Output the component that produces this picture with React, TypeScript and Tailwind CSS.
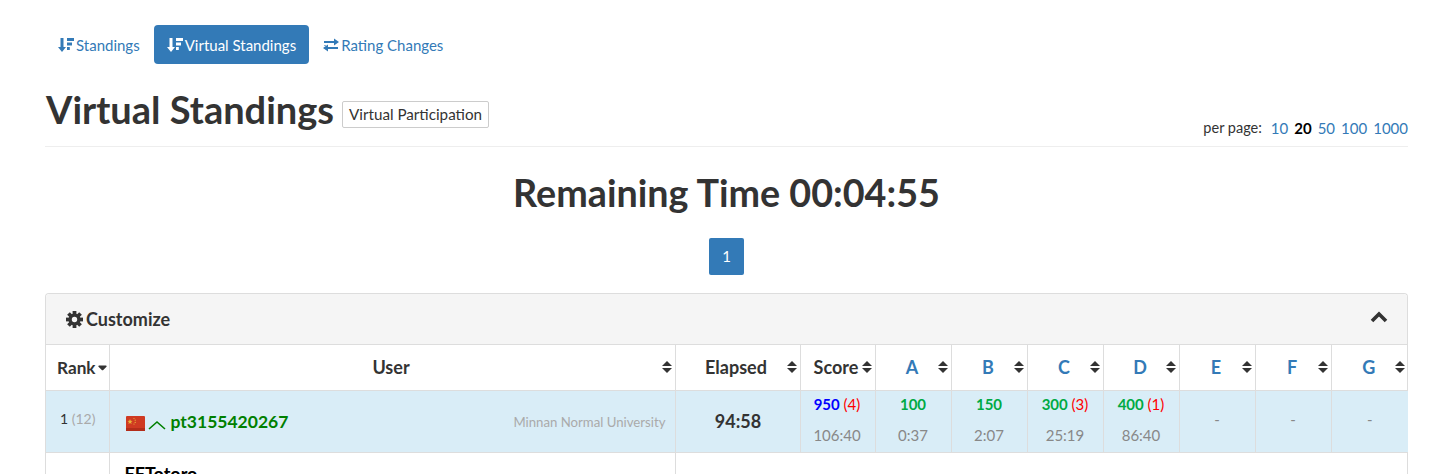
import { FaSortDown } from "react-icons/fa";

type Problem = { letter: string; score?: string; penalty?: string; time?: string };

const problems: Problem[] = [
  { letter: "A", score: "100", time: "0:37" },
  { letter: "B", score: "150", time: "2:07" },
  { letter: "C", score: "300", penalty: "(3)", time: "25:19" },
  { letter: "D", score: "400", penalty: "(1)", time: "86:40" },
  { letter: "E" },
  { letter: "F" },
  { letter: "G" },
];

const pageSizes = ["10", "20", "50", "100", "1000"];

function SortIcon() {
  return (
    <svg width="10" height="12" viewBox="0 0 10 12" className="absolute right-[3px] top-1/2 -translate-y-1/2" fill="#333">
      <path d="M5 0 L10 5 L0 5 Z" />
      <path d="M5 12 L10 7 L0 7 Z" />
    </svg>
  );
}

// arrow with bars, as the glyphicon on the tabs
function StandingsIcon() {
  return (
    <svg width="16" height="16" viewBox="0 0 16 16" className="shrink-0" fill="currentColor">
      <path d="M2.5 1h3v9h2.5l-4 5-4-5h2.5z" />
      <path d="M9 1h7v3H9z" />
      <path d="M9 5.5h5v3H9z" />
      <path d="M9 10h2.8v3H9z" />
    </svg>
  );
}

function TransferIcon() {
  return (
    <svg width="16" height="14" viewBox="0 0 16 14" className="shrink-0" fill="currentColor">
      <path d="M1 3h10V0.5L16 4l-5 3.5V5H1z" />
      <path d="M15 9H5V6.5L0 10l5 3.5V11h10z" />
      <path d="M1 7h2v1H1z" opacity="0.6" />
    </svg>
  );
}

function CogIcon() {
  return (
    <svg width="17" height="17" viewBox="0 0 17 17" className="shrink-0" fill="#333">
      {[0, 45, 90, 135].map((angle) => (
        <rect key={angle} x="6.6" y="0" width="3.8" height="17" transform={`rotate(${angle} 8.5 8.5)`} />
      ))}
      <circle cx="8.5" cy="8.5" r="6" />
      <circle cx="8.5" cy="8.5" r="2.7" fill="#f5f5f5" />
    </svg>
  );
}

function ChinaFlag() {
  return (
    <svg width="19" height="15" viewBox="0 0 19 15" className="shrink-0">
      <rect width="19" height="15" rx="1" fill="#cf3a22" />
      <rect y="12" width="19" height="3" fill="#b32d1a" />
      <path d="M4 3l.7 1.8 1.9.1-1.5 1.2.5 1.9L4 7l-1.6 1 .5-1.9L1.4 4.9l1.9-.1z" fill="#e8b63a" />
      <circle cx="8" cy="2.5" r=".6" fill="#e8b63a" />
      <circle cx="9.2" cy="4.2" r=".6" fill="#e8b63a" />
      <circle cx="9.2" cy="6.4" r=".6" fill="#e8b63a" />
      <circle cx="8" cy="8" r=".6" fill="#e8b63a" />
    </svg>
  );
}

export default function App() {
  return (
    <div className="h-[474px] overflow-hidden bg-white font-['Lato','Liberation_Sans',sans-serif] text-[15px] text-[#333]">
      <div className="mx-[45px] w-[1363px]">
        {/* tabs */}
        <div className="flex gap-[1px] pt-[25px]">
          <a className="flex h-[39px] items-center gap-[2px] rounded-[4px] px-[13px] text-[#337ab7]">
            <StandingsIcon />
            <span className="mt-[2px]">Standings</span>
          </a>
          <a className="flex h-[39px] items-center gap-[2px] rounded-[4px] bg-[#337ab7] px-[13px] text-white">
            <StandingsIcon />
            <span className="mt-[2px]">Virtual Standings</span>
          </a>
          <a className="flex h-[39px] items-center gap-[2px] rounded-[4px] px-[13px] text-[#337ab7]">
            <TransferIcon />
            <span className="mt-[2px]">Rating Changes</span>
          </a>
        </div>

        {/* title */}
        <div className="flex h-[83px] items-end justify-between border-b border-[#eee] pb-[8px]">
          <div className="flex items-center gap-[8px] pb-[9px] pl-[1px]">
            <h1 className="text-[38px] leading-[40px] font-bold">Virtual Standings</h1>
            <span className="mt-[10px] rounded-[2px] border border-[#ccc] px-[6px] py-[3px] text-[15.2px] leading-[19px]">
              Virtual Participation
            </span>
          </div>
          <div className="flex items-center leading-[20px]">
            <span className="mr-[3px] text-[14.5px]">per page:</span>
            {pageSizes.map((size) => (
              <span key={size} className={size === "20" ? "ml-[6px] font-bold text-black" : "ml-[6px] text-[#337ab7]"}>
                {size}
              </span>
            ))}
          </div>
        </div>

        <h1 className="pt-[26px] text-center text-[37.7px] leading-[40px] font-bold">Remaining Time 00:04:55</h1>

        {/* pagination */}
        <div className="flex justify-center pt-[25px]">
          <span className="flex h-[37px] w-[35px] items-center justify-center rounded-[2px] bg-[#337ab7] text-white">1</span>
        </div>

        {/* panel */}
        <div className="mt-[18px] rounded-[4px] border border-[#ddd] border-b-0">
          <div className="flex h-[51px] items-center justify-between rounded-t-[4px] border-b border-[#ddd] bg-[#f5f5f5] pr-[19px] pl-[20px]">
            <div className="flex items-center gap-[3px] text-[18px] font-bold">
              <CogIcon />
              Customize
            </div>
            <svg width="18" height="12" viewBox="0 0 18 12" className="-mt-[4px]" fill="none" stroke="#333" strokeWidth="3.6">
              <path d="M2 10 L9 3 L16 10" />
            </svg>
          </div>
          <table className="w-[1362px] table-fixed border-collapse">
            <colgroup>
              <col className="w-[63px]" />
              <col className="w-[566px]" />
              <col className="w-[125px]" />
              <col className="w-[75px]" />
              <col className="w-[76px]" />
              <col className="w-[76px]" />
              <col className="w-[76px]" />
              <col className="w-[76px]" />
              <col className="w-[76px]" />
              <col className="w-[76px]" />
              <col className="w-[77px]" />
            </colgroup>
            <thead>
              <tr className="h-[45px] border-b border-[#ddd] text-[18px]">
                <th className="border-r border-[#ddd] pl-[11px] text-left font-bold">
                  <span className="inline-flex items-center text-[17.2px]">
                    Rank
                    <FaSortDown className="-mt-[7px] -ml-[1px] text-[15px]" />
                  </span>
                </th>
                <th className="relative border-r border-[#ddd] font-bold">
                  <span className="-ml-[2px]">User</span>
                  <SortIcon />
                </th>
                <th className="relative border-r border-[#ddd] pr-[3px] font-bold">
                  Elapsed
                  <SortIcon />
                </th>
                <th className="relative border-r border-[#ddd] pr-[3px] font-bold">
                  Score
                  <SortIcon />
                </th>
                {problems.map((p) => (
                  <th key={p.letter} className="relative border-r border-[#ddd] pr-[2px] font-bold text-[#337ab7] last:border-r-0">
                    {p.letter}
                    <SortIcon />
                  </th>
                ))}
              </tr>
            </thead>
            <tbody>
              <tr className="h-[62px] border-b border-[#ddd] bg-[#d9edf7]">
                <td className="border-r border-[#ddd] text-center text-[14px]">
                  <div className="-mt-[6px] pl-[1px]">
                    1 <span className="text-[#aaa]">(12)</span>
                  </div>
                </td>
                <td className="border-r border-[#ddd]">
                  <div className="flex items-center justify-between pt-[2px] pr-[9px] pl-[16px]">
                    <div className="flex items-center text-[17.5px] leading-[24px] font-bold text-[#008000]">
                      <span className="mt-[3px]">
                        <ChinaFlag />
                      </span>
                      <svg width="18" height="10" viewBox="0 0 18 10" className="mt-[5px] mr-[5px] ml-[3px] shrink-0" fill="none" stroke="#008000" strokeWidth="1.6">
                        <path d="M1 9 L9 2 L17 9" />
                      </svg>
                      pt3155420267
                    </div>
                    <span className="mt-[2px] text-[13.2px] text-[#aaa]">Minnan Normal University</span>
                  </div>
                </td>
                <td className="border-r border-[#ddd] text-center text-[18px] font-bold">
                  <span className="pl-[1px]">94:58</span>
                </td>
                <td className="border-r border-[#ddd] text-center">
                  <div className="-mt-[4px] flex flex-col items-center pr-[1px] leading-[20px]">
                    <span>
                      <b className="text-[#0000ff]">950</b> <span className="text-[#ff0000]">(4)</span>
                    </span>
                    <span className="mt-[11px] text-[#888]">106:40</span>
                  </div>
                </td>
                {problems.map((p) =>
                  p.score ? (
                    <td key={p.letter} className="border-r border-[#ddd] text-center">
                      <div className="-mt-[4px] flex flex-col items-center leading-[20px]">
                        <span>
                          <b className="text-[#00aa44]">{p.score}</b>
                          {p.penalty && <span className="text-[#ff0000]"> {p.penalty}</span>}
                        </span>
                        <span className="mt-[11px] text-[#888]">{p.time}</span>
                      </div>
                    </td>
                  ) : (
                    <td key={p.letter} className="border-r border-[#ddd] pb-[4px] text-center text-[#888] last:border-r-0">
                      -
                    </td>
                  ),
                )}
              </tr>
              <tr className="h-[62px]">
                <td className="border-r border-[#ddd]" />
                <td className="border-r border-[#ddd] pb-[17px] pl-[15px] text-[18px] font-bold text-black">FFTotoro</td>
                <td colSpan={9} />
              </tr>
            </tbody>
          </table>
        </div>
      </div>
    </div>
  );
}
